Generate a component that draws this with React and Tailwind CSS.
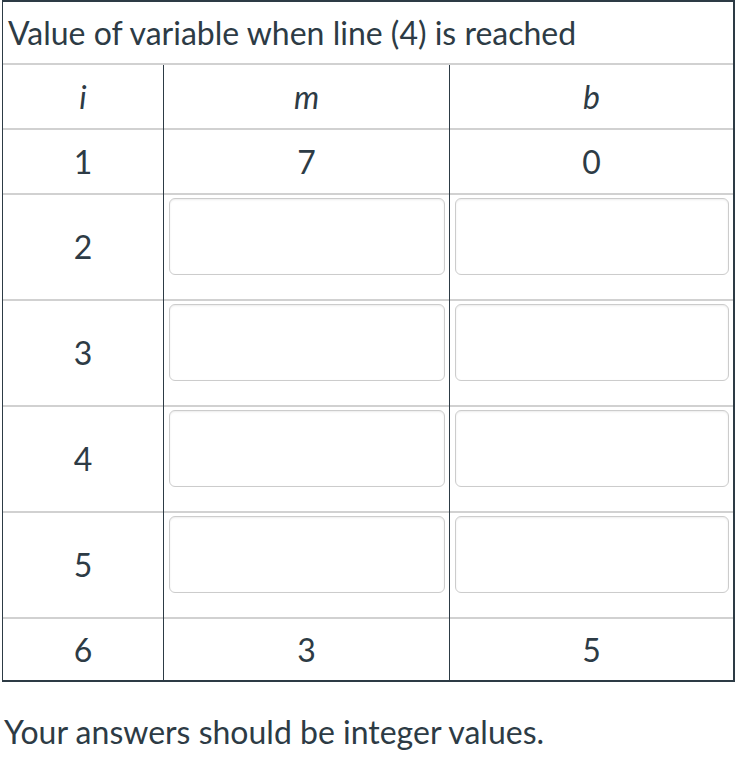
import React from 'react';

const rows = [
  { i: '1', m: '7', b: '0' },
  { i: '2', input: true },
  { i: '3', input: true },
  { i: '4', input: true },
  { i: '5', input: true },
  { i: '6', m: '3', b: '5' },
];

const Box = () => (
  <div className="w-full h-full pl-[5px] pr-[4px] pt-[3px] pb-[24px]">
    <input
      type="text"
      className="w-full h-full bg-white border-[1.5px] border-[#cccccc] rounded-[6px] shadow-[inset_0_1px_2px_rgba(0,0,0,0.08)] outline-none"
    />
  </div>
);

export default function App() {
  const cell = 'bg-white flex items-center justify-center';
  return (
    <div className="min-h-screen bg-white text-[#2d3b45] font-['Lato','Liberation_Sans',sans-serif]">
      <div className="ml-[2px] w-[733px] border-l border-t-2 border-r-2 border-b-2 border-[#2d3b45]">
        <div className="h-[63px] border-b-2 border-[#d1d1d1] flex items-center pl-[5px] text-[32px]">
          Value of variable when line (4) is reached
        </div>
        <div className="grid grid-cols-[160px_285px_283px] gap-x-px bg-[#2d3b45] text-[32px]">
          <div className={`${cell} h-[65px] border-b-2 border-[#d1d1d1] italic`}>i</div>
          <div className={`${cell} h-[65px] border-b-2 border-[#d1d1d1] italic`}>m</div>
          <div className={`${cell} h-[65px] border-b-2 border-[#d1d1d1] italic`}>b</div>
          {rows.map((r, idx) => {
            const last = idx === rows.length - 1;
            const h = r.input ? 'h-[106px]' : last ? 'h-[61px]' : 'h-[65px]';
            const bb = last ? '' : 'border-b-2 border-[#d1d1d1]';
            return (
              <React.Fragment key={r.i}>
                <div className={`${cell} ${h} ${bb}`}>{r.i}</div>
                <div className={`${cell} ${h} ${bb}`}>{r.input ? <Box /> : r.m}</div>
                <div className={`${cell} ${h} ${bb}`}>{r.input ? <Box /> : r.b}</div>
              </React.Fragment>
            );
          })}
        </div>
      </div>
      <p className="mt-[26px] pl-[4px] text-[32px] leading-[48px]">Your answers should be integer values.</p>
    </div>
  );
}
